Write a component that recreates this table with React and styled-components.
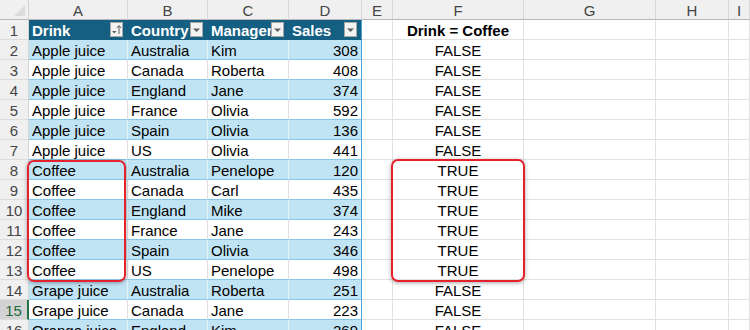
import React from 'react'
import styled, { createGlobalStyle } from 'styled-components'

const GlobalStyle = createGlobalStyle`
  html, body {
    margin: 0;
    padding: 0;
    background: #ffffff;
    overflow: hidden;
  }
  body {
    font-family: 'Liberation Sans', Arial, sans-serif;
  }
`

const COLS = ['A', 'B', 'C', 'D', 'E', 'F', 'G', 'H', 'I']
const WIDTHS = '29px 99px 80px 81px 73px 31px 131px 132px 73px 1fr'

const rows = [
  ['Apple juice', 'Australia', 'Kim', 308],
  ['Apple juice', 'Canada', 'Roberta', 408],
  ['Apple juice', 'England', 'Jane', 374],
  ['Apple juice', 'France', 'Olivia', 592],
  ['Apple juice', 'Spain', 'Olivia', 136],
  ['Apple juice', 'US', 'Olivia', 441],
  ['Coffee', 'Australia', 'Penelope', 120],
  ['Coffee', 'Canada', 'Carl', 435],
  ['Coffee', 'England', 'Mike', 374],
  ['Coffee', 'France', 'Jane', 243],
  ['Coffee', 'Spain', 'Olivia', 346],
  ['Coffee', 'US', 'Penelope', 498],
  ['Grape juice', 'Australia', 'Roberta', 251],
  ['Grape juice', 'Canada', 'Jane', 223],
  ['Orange juice', 'England', 'Kim', 269],
]

const Sheet = styled.div`
  position: relative;
  display: grid;
  grid-template-columns: ${WIDTHS};
  grid-auto-rows: 20px;
  width: 750px;
  height: 330px;
  overflow: hidden;
  font-size: 15px;
  color: #000;
`

const Corner = styled.div`
  position: relative;
  background: #f0f0f0;
  border-right: 1px solid #d4d4d4;
  border-bottom: 1px solid #b7b7b7;
  box-sizing: border-box;
  &::after {
    content: '';
    position: absolute;
    right: 3px;
    bottom: 3px;
    border-left: 11px solid transparent;
    border-bottom: 11px solid #dcdcdc;
  }
`

const ColHead = styled.div`
  display: flex;
  align-items: center;
  justify-content: center;
  background: #f0f0f0;
  color: #454545;
  border-right: 1px solid #d8d8d8;
  border-bottom: 1px solid #b7b7b7;
  box-sizing: border-box;
  padding-top: 1px;
`

const RowHead = styled.div`
  display: flex;
  align-items: center;
  justify-content: center;
  background: ${p => (p.$selected ? '#d3d3d3' : '#f0f0f0')};
  color: ${p => (p.$selected ? '#1d6b3c' : '#454545')};
  border-right: ${p => (p.$selected ? '2px solid #217346' : '1px solid #d4d4d4')};
  border-bottom: 1px solid #dcdcdc;
  box-sizing: border-box;
  padding-top: 2px;
`

const fills = {
  head: '#156082',
  band: '#c1e4f5',
  plain: '#ffffff',
}

const Cell = styled.div`
  position: relative;
  display: flex;
  align-items: center;
  justify-content: ${p => (p.$align === 'right' ? 'flex-end' : p.$align === 'center' ? 'center' : 'flex-start')};
  padding: 2px 3px 0 3px;
  box-sizing: border-box;
  overflow: hidden;
  white-space: nowrap;
  background: ${p => fills[p.$fill || 'plain']};
  color: ${p => (p.$fill === 'head' ? '#ffffff' : '#000000')};
  font-weight: ${p => (p.$bold ? 700 : 400)};
  border-bottom: 1px solid ${p => (p.$table ? (p.$fill === 'head' ? '#156082' : '#83c7e9') : '#e1e1e1')};
  border-right: 1px solid
    ${p =>
      p.$edge
        ? '#4aa3d8'
        : p.$fill === 'head'
          ? '#156082'
          : p.$fill === 'band'
            ? '#e4f2fa'
            : '#e1e1e1'};
`

const FilterBtn = styled.span`
  position: absolute;
  right: 4px;
  top: 2px;
  width: 13px;
  height: 15px;
  background: #f3f3f3;
  border: 1px solid #a9a9a9;
  box-sizing: border-box;
  display: flex;
  align-items: center;
  justify-content: center;
`

const Callout = styled.div`
  position: absolute;
  left: ${p => p.$x}px;
  top: ${p => p.$y}px;
  width: ${p => p.$w}px;
  height: ${p => p.$h}px;
  border: 2px solid #e5222b;
  border-radius: 7px;
  box-sizing: border-box;
  box-shadow: 0 1px 4px rgba(0, 0, 0, 0.35);
  pointer-events: none;
`

const DropIcon = () => (
  <svg width='11' height='13' viewBox='0 0 11 13'>
    <path d='M2 5.5h7l-3.5 3.5z' fill='#5f5f5f' />
  </svg>
)

const SortIcon = () => (
  <svg width='11' height='13' viewBox='0 0 11 13'>
    <path d='M1 8h4.5l-2.25 2.5z' fill='#5f5f5f' />
    <path d='M8 3v8' stroke='#5f5f5f' strokeWidth='1' />
    <path d='M6 5l2-2.5 2 2.5' stroke='#5f5f5f' strokeWidth='1' fill='none' />
  </svg>
)

const headers = ['Drink', 'Country', 'Manager', 'Sales']

const App = () => {
  const allRows = [null, ...rows]
  return (
    <>
      <GlobalStyle />
      <Sheet>
        <Corner />
        {COLS.map(c => (
          <ColHead key={c}>{c}</ColHead>
        ))}

        {allRows.map((r, i) => {
          const n = i + 1
          const fill = i === 0 ? 'head' : n % 2 === 0 ? 'band' : 'plain'
          const isCoffee = r && r[0] === 'Coffee'
          return (
            <React.Fragment key={n}>
              <RowHead $selected={n === 15}>{n}</RowHead>
              {headers.map((h, ci) => (
                <Cell
                  key={h}
                  $table
                  $fill={fill}
                  $bold={i === 0}
                  $edge={ci === 3}
                  $align={i > 0 && ci === 3 ? 'right' : 'left'}
                >
                  {i === 0 ? h : r[ci]}
                  {i === 0 && <FilterBtn>{ci === 0 ? <SortIcon /> : <DropIcon />}</FilterBtn>}
                </Cell>
              ))}
              <Cell />
              <Cell $align='center' $bold={i === 0}>
                {i === 0 ? 'Drink = Coffee' : isCoffee ? 'TRUE' : 'FALSE'}
              </Cell>
              <Cell />
              <Cell />
              <Cell />
            </React.Fragment>
          )
        })}

        <Callout $x={27} $y={160} $w={99} $h={122} />
        <Callout $x={391} $y={159} $w={134} $h={123} />
      </Sheet>
    </>
  )
}

export default App
